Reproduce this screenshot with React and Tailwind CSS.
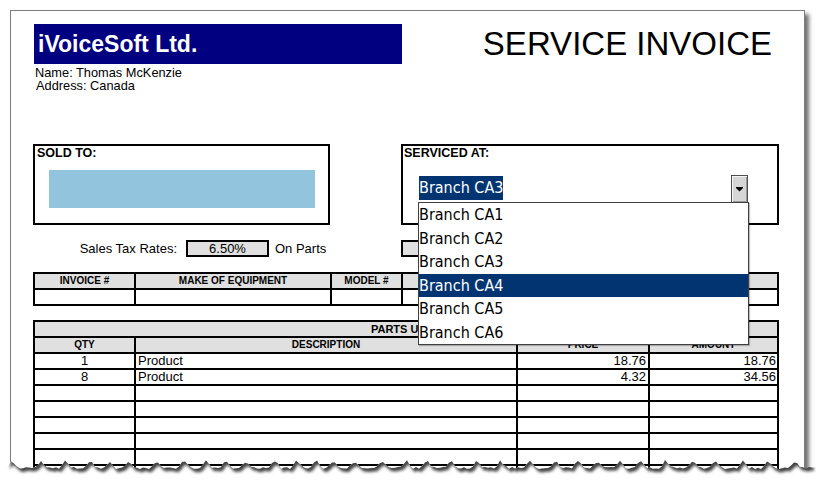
import React from "react";

const ARIAL = { fontFamily: "'Liberation Sans', Arial, sans-serif" };

function makeJag() {
  const pts = [];
  let s = 98765;
  const r = () => {
    s = (s * 16807) % 2147483647;
    return s / 2147483647;
  };
  let x = 8;
  let nextPeak = 12;
  while (x <= 812) {
    let y = 468 + (r() - 0.5) * 2;
    const d = Math.abs(x - nextPeak);
    if (d < 6) y -= (6 - d) * (1.1 + r() * 0.3);
    if (x > nextPeak + 6) nextPeak = x + 10 + Math.floor(r() * 12);
    pts.push([x, +y.toFixed(1)]);
    x += 3;
  }
  return pts;
}
const JAG = makeJag();
const jagStr = JAG.map((p) => p.join(",")).join(" ");
const below = `0,${JAG[0][1]} ${jagStr} 816,${JAG[JAG.length - 1][1]} 816,488 0,488`;
const shadowPoly = `12,440 ${JAG.map(([x, y]) => `${x + 2},${y + 3.5}`).join(" ")} 810,440`;

function HeadCell({ w, children, last }) {
  return (
    <div
      className={`h-full flex items-center justify-center text-[10px] font-bold leading-none ${last ? "flex-1" : "border-r-2 border-black"}`}
      style={w ? { width: w } : undefined}
    >
      {children}
    </div>
  );
}

const branches = ["Branch CA1", "Branch CA2", "Branch CA3", "Branch CA4", "Branch CA5", "Branch CA6"];

const parts = [
  { q: "1", d: "Product", p: "18.76", a: "18.76" },
  { q: "8", d: "Product", p: "4.32", a: "34.56" },
  {}, {}, {}, {}, {}, {},
];

export default function App() {
  return (
    <div className="relative w-[816px] h-[488px] bg-white overflow-hidden" style={ARIAL}>
      <div className="ml-[10px] mt-[10px] w-[795px] h-[468px] border-l border-t border-r border-[#7d7d7d] bg-white overflow-hidden shadow-[4px_4px_4px_rgba(0,0,0,0.55)] pl-[22px] pt-[13px]">
        <div className="w-[746px] text-black">
          {/* header */}
          <div className="h-[120px]">
            <div className="flex justify-between">
              <div className="ml-[1px] w-[368px] h-[40px] bg-[#000080] flex items-center pl-[4px]">
                <span className="text-white font-bold text-[23px] leading-none">iVoiceSoft Ltd.</span>
              </div>
              <div className="mr-[7px] text-[33px] leading-[40px]">SERVICE INVOICE</div>
            </div>
            <div className="mt-[1.5px] pl-[2px] text-[12.8px] leading-[13px]">
              <div>Name: Thomas McKenzie</div>
              <div className="pl-[1px]">Address: Canada</div>
            </div>
          </div>

          {/* boxes */}
          <div className="flex h-[81px] justify-between">
            <div className="w-[297px] h-full border-2 border-black">
              <div className="pl-[2px] pt-[1px] text-[12.5px] leading-[13px] font-bold">SOLD TO:</div>
              <div className="ml-[14px] mt-[10px] w-[266px] h-[38px] bg-[#92c5dd]" />
            </div>
            <div className="relative w-[378px] h-full border-2 border-black">
              <div className="pl-[1px] pt-[1px] text-[12.5px] leading-[13px] font-bold">SERVICED AT:</div>
              <div className="ml-[16px] mt-[13px] w-[329px] flex items-center justify-between">
                <div
                  className="h-[24px] bg-[#033472] text-white text-[16px] leading-[24px] px-0"
                  style={{ fontFamily: "'DejaVu Sans Condensed', Roboto, sans-serif" }}
                >
                  Branch CA3
                </div>
                <div className="w-[17px] h-[28px] mt-[2px] border border-[#505050] bg-[#d6d6d6] shadow-[inset_1px_1px_0_#f4f4f4,inset_-1px_-1px_0_#9a9a9a] flex items-center justify-center">
                  <svg width="7" height="5" viewBox="0 0 7 5">
                    <rect x="0" y="0" width="7" height="1" fill="#000" />
                    <polygon points="0,1 7,1 3.5,4.5" fill="#000" />
                  </svg>
                </div>
              </div>
              {/* open list */}
              <div
                className="absolute left-[15px] top-[56px] z-10 w-[331px] border border-[#404040] bg-white shadow-[1px_1px_1px_rgba(0,0,0,0.25)]"
                style={{ fontFamily: "'DejaVu Sans Condensed', Roboto, sans-serif" }}
              >
                {branches.map((b) => (
                  <div
                    key={b}
                    className={`h-[23.5px] leading-[23.5px] text-[16px] ${b === "Branch CA4" ? "bg-[#033472] text-white" : "text-black"}`}
                  >
                    {b}
                  </div>
                ))}
              </div>
            </div>
          </div>

          {/* tax rates */}
          <div className="mt-[15px] h-[17px] flex items-center text-[13px]">
            <div className="w-[153px] text-right pr-[9px] leading-none">Sales Tax Rates:</div>
            <div className="w-[83px] h-[17px] border-2 border-black bg-[#e0e0e0] flex items-center justify-center leading-none">6.50%</div>
            <div className="ml-[6px] w-[126px] leading-none">On Parts</div>
            <div className="w-[83px] h-[17px] border-2 border-black bg-[#e0e0e0]" />
          </div>

          {/* invoice table */}
          <div className="mt-[15px] border-2 border-black">
            <div className="h-[16px] flex border-b-2 border-black bg-[#e0e0e0]">
              <HeadCell w={101}>INVOICE #</HeadCell>
              <HeadCell w={196}>MAKE OF EQUIPMENT</HeadCell>
              <HeadCell w={71}>MODEL #</HeadCell>
              <HeadCell w={180}></HeadCell>
              <HeadCell last>PURCHASE DATE</HeadCell>
            </div>
            <div className="h-[14px] flex">
              <div className="w-[101px] h-full border-r-2 border-black" />
              <div className="w-[196px] h-full border-r-2 border-black" />
              <div className="w-[71px] h-full border-r-2 border-black" />
              <div className="w-[180px] h-full border-r-2 border-black" />
              <div className="flex-1" />
            </div>
          </div>

          {/* parts table */}
          <div className="mt-[14px] border-2 border-black">
            <div className="h-[16px] border-b-2 border-black bg-[#e0e0e0] flex items-center justify-center text-[11px] font-bold leading-none">
              PARTS USED
            </div>
            <div className="h-[16px] flex border-b-2 border-black bg-[#e0e0e0]">
              <HeadCell w={101}>QTY</HeadCell>
              <HeadCell w={382}>DESCRIPTION</HeadCell>
              <HeadCell w={132}>PRICE</HeadCell>
              <HeadCell last>AMOUNT</HeadCell>
            </div>
            {parts.map((r, i) => (
              <div key={i} className="h-[16px] flex border-b-2 border-black text-[13px] leading-[14px]">
                <div className="w-[101px] h-full border-r-2 border-black text-center">{r.q}</div>
                <div className="w-[382px] h-full border-r-2 border-black pl-[2px]">{r.d}</div>
                <div className="w-[132px] h-full border-r-2 border-black text-right pr-[2px]">{r.p}</div>
                <div className="flex-1 h-full text-right pr-[1px]">{r.a}</div>
              </div>
            ))}
          </div>
        </div>
      </div>

      {/* torn bottom edge */}
      <svg className="absolute left-0 top-[440px] z-20" width="816" height="48" viewBox="0 440 816 48">
        <defs>
          <clipPath id="belowJag">
            <polygon points={below} />
          </clipPath>
          <filter id="tearBlur" x="-5%" y="-50%" width="110%" height="200%">
            <feGaussianBlur stdDeviation="1.8" />
          </filter>
        </defs>
        <polygon points={below} fill="#ffffff" />
        <g clipPath="url(#belowJag)">
          <polygon points={shadowPoly} fill="#2e2e2e" opacity="0.9" filter="url(#tearBlur)" />
        </g>
      </svg>
    </div>
  );
}
